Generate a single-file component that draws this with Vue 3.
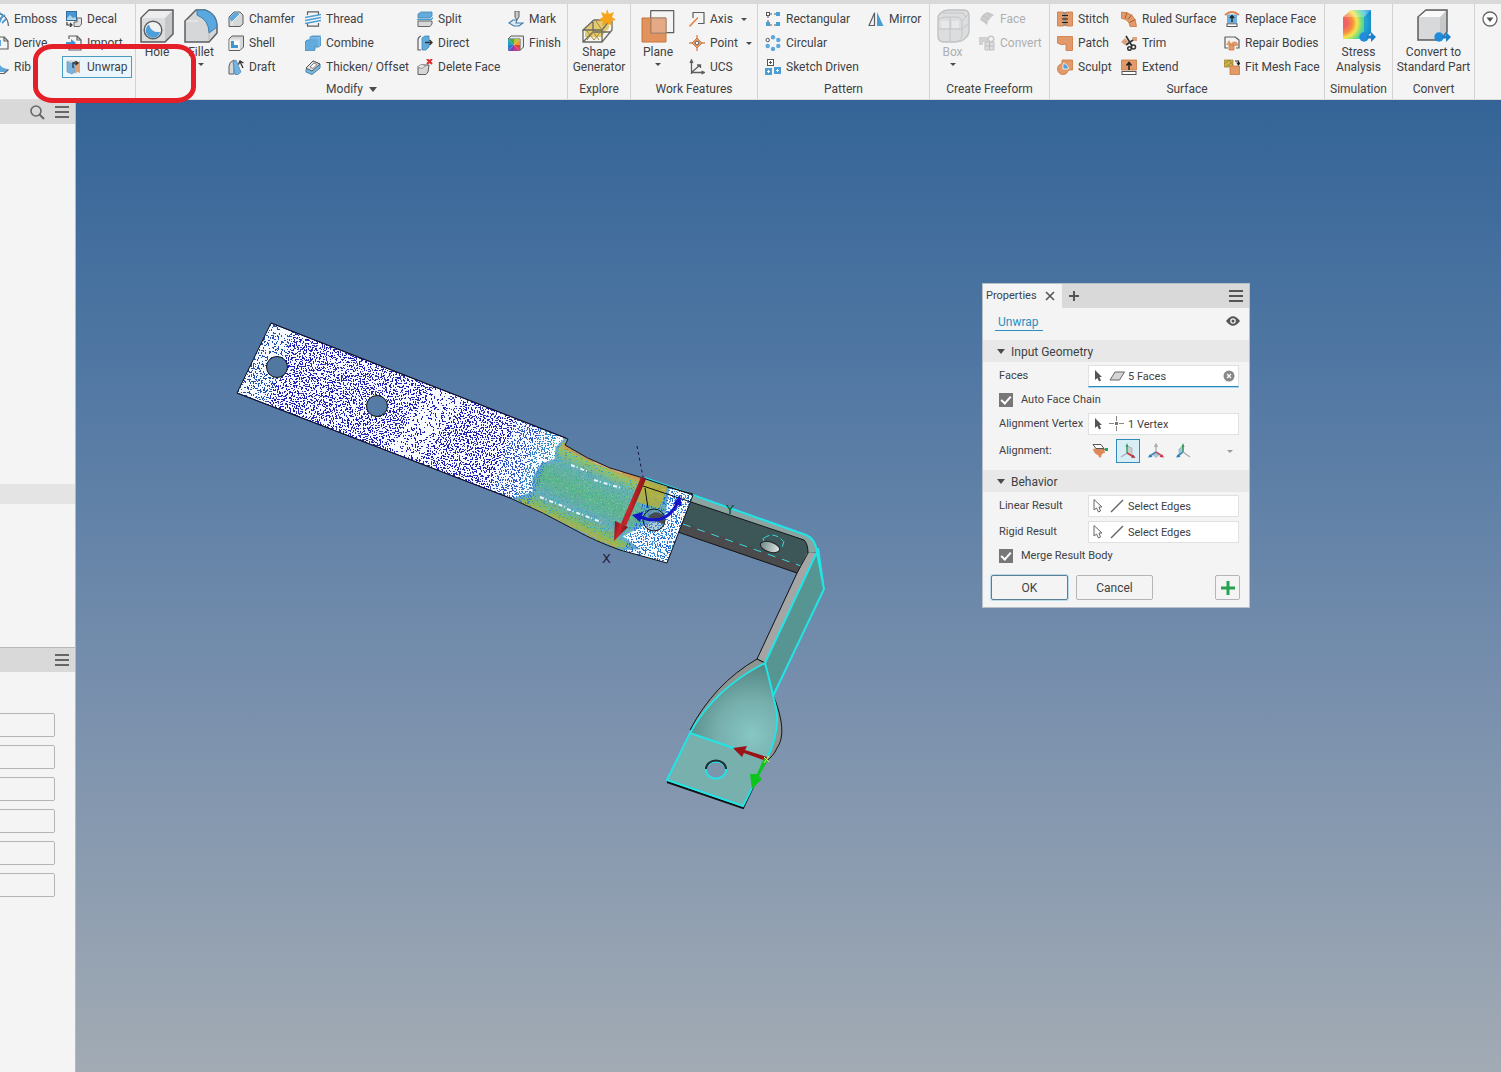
<script setup>
import { ref } from 'vue'

const K = 'fill="none" stroke="#5c5e60" stroke-width="1.2" stroke-linejoin="round"'
const B = 'fill="#5ea9dc"'
const O = 'fill="#e29a6a" stroke="#c9793f" stroke-width=".8"'
const G = 'fill="#d6d7d8"'

const icons = {
  emboss: `<path d="M1 14a11 11 0 0 1 14 0V10A9 9 0 0 0 1 5z" fill="#fff"/><path d="M2 2c7 0 13 4 13.400 13" ${K}/><path d="M3 5l5-3M5 9l7-5M9 12l4-4M6 12l4-8" fill="none" stroke="#4c9bd0" stroke-width="1.800"/>`,
  derive: `<path d="M6 2h5l4 4v8H6" ${K}/><path d="M11 2v4h4" ${K}/><path d="M0 5h8v6H5v3H0z" ${B}/>`,
  rib: `<path d="M6 2q0 7 9 8l-3 3H0V2z" ${B}/><path d="M0 14.500h11l4.500-4" ${K}/>`,
  decal: `<rect x=".5" y=".5" width="10" height="9" fill="#4898d8" stroke="#356c98"/><path d="M1 7l3-3 3 3 2-1 1 1v2H1z" fill="#a9d8ef"/><path d="M8 11h3V7h4.500v6l-2 2.500H8z" fill="#e0e1e2" stroke="#666"/><path d="M1 11v3h4M4 12l2 2-2 2" fill="none" stroke="#333" stroke-width="1.200"/>`,
  import: `<path d="M3 4V1h8l4 4v10H3v-3" ${K}/><path d="M11 1v4h4" ${K}/><path d="M0 7h5V4l5 4-5 4V9H0z" fill="#3e96d4"/>`,
  unwrap: `<path d="M1 2l5 2 3-2v11l-3 2-5-2z" fill="#7bb3dc" stroke="#5b8fb5" stroke-width=".6"/><path d="M1 2l4-1 4 1-3 2z" ${G}/><path d="M9 5l3-2 2-1v12l-3-1-2 2z" fill="#dfa27a"/><path d="M7 9V4h4M9.500 2L12 4 9.500 6" fill="none" stroke="#333" stroke-width="1.300"/>`,
  chamfer: `<path d="M1 6l5-5h6l3 3v9l-3 2.500H1z" ${G} stroke="#5c5e60"/><path d="M1 7l6-6 5 2-8 8z" ${B}/><path d="M4 15V11l8-8" fill="none" stroke="#eee"/>`,
  shell: `<path d="M1 4l3-3h11.500v11L12 15.500H1z" ${G} stroke="#5c5e60"/><path d="M1.500 4.500h10.500v10.500H1.500z" fill="#eee"/><path d="M3 6h8v7H3z" fill="#fff"/><path d="M3 6h3v4h4v3H3z" fill="#3e96d4"/>`,
  draft: `<path d="M1 15V7q0-4 5-6v14z" ${G} stroke="#5c5e60"/><path d="M5 3l3-2 5 12-3 2.500H7z" fill="#74b3df" stroke="#4387b5" stroke-width=".7"/><path d="M15 9L12 2.500M10.500 5.500L12 2l3.500 2" fill="none" stroke="#333" stroke-width="1.300"/>`,
  thread: `<path d="M2.500 4V.8h11V4M2.500 12v3.200h11V12" ${K}/><path d="M0 6.500l16-3M0 9.500l16-3M0 12.500l16-3" stroke="#4a9fd6" stroke-width="1.500"/>`,
  combine: `<path d="M5 2l2-1h9v9l-2 2h-4v3l-1 1H0V7l2-2h3z" fill="#64abdd" stroke="#4286b4" stroke-width=".8"/><path d="M5 3h9l2-2M14 3v9" fill="none" stroke="#8bc4eb"/>`,
  thicken: `<path d="M1 10L8 2l7 3v4l-8 6.500L1 13z" fill="#7ab8e2" stroke="#477fa8"/><path d="M1 9l7-7 7 3-8 7z" fill="#e1e3e5" stroke="#555"/><path d="M5 8l4-4 3 1.500L8 9.500z" fill="#f8f8f8" stroke="#666" stroke-width=".8"/>`,
  split: `<path d="M1 3l3-2h11v4l-2 2H1z" fill="#64abdd" stroke="#4286b4" stroke-width=".8"/><path d="M0 8.500h14l2-2" fill="none" stroke="#4a9fd6" stroke-width="1.400"/><path d="M1 10h14v3l-2 2.500H1z" ${G} stroke="#666"/>`,
  direct: `<path d="M4 1Q1 2 1 5v10h3" ${K}/><path d="M5 3l3-2h4v11l-3 3H5z" fill="#64abdd" stroke="#4286b4" stroke-width=".8"/><path d="M8 7.500h7M12.500 5L15 7.500 12.500 10" fill="none" stroke="#333" stroke-width="1.400"/>`,
  deleteface: `<path d="M1 9l4-3h7l-1 7-2 2.500H1z" ${G} stroke="#5c5e60"/><path d="M0 8l4-2.500 5 1-4 3z" fill="#e9eaeb" stroke="#777" stroke-width=".7"/><path d="M10 0l5 5M15 0l-5 5" stroke="#df2b2b" stroke-width="2"/>`,
  mark: `<path d="M7 0h4v6L9 9 7 6z" fill="#c9cbcc" stroke="#5c5e60"/><path d="M1 12l4-3h4l-1 3h7l-4 3H6z" fill="#dcebf6" stroke="#427da8" stroke-width="1.100"/>`,
  finish: `<path d="M0 4l3-3h12.500v11L12 15.500V4z" fill="#e8e9ea" stroke="#5c5e60"/><path d="M0 4h6v6z" fill="#43a857"/><path d="M0 4l6 6H0z" fill="#24a0b8"/><path d="M6 4h6l-6 6z" fill="#b9c52f"/><path d="M12 4v6H6z" fill="#f2972b"/><path d="M0 10h6l-6 6z" fill="#287dcc"/><path d="M6 10v6H0z" fill="#7846b1"/><path d="M6 10l6 6H6z" fill="#c8388e"/><path d="M6 10h6v6z" fill="#ea3f38"/>`,
  axis: `<path d="M4 7V1.500h11v11H9" ${K}/><path d="M.5 15.500L9 6.500" stroke="#df8750" stroke-width="1.600"/>`,
  point: `<path d="M8 0v5M8 11v5M0 8h4M12 8h4" stroke="#dc8850" stroke-width="1.400"/><path d="M8 3l5 5-5 5-5-5z" fill="#e5a071" stroke="#d0763a"/><circle cx="8" cy="8" r="1.800" fill="#fff" stroke="#5c5e60"/>`,
  ucs: `<path d="M2.500 15V2M1 4l1.500-3L4 4M3 13.500h12M12.500 12l3 1.500-3 1.500M3 13l8-7M8 6h3.500v3" fill="none" stroke="#5c5e60" stroke-width="1.300"/>`,
  rectangular: `<path d="M5 3h6M3 5v6M5 14h6" stroke="#555" stroke-dasharray="2 2"/><rect x="1.500" y="1.500" width="3" height="3" fill="#fff" stroke="#555"/><path d="M11 1h4v4h-4zM1 11h4v4H1zM11 11h4v4h-4z" fill="#4c9fd6"/>`,
  circular: `<circle cx="8" cy="2.200" r="2.200" ${B}/><circle cx="13.300" cy="5" r="2.200" ${B}/><circle cx="13.300" cy="11" r="2.200" ${B}/><circle cx="8" cy="14" r="2.200" ${B}/><circle cx="2.700" cy="11" r="2.200" ${B}/><circle cx="2.700" cy="5" r="1.700" fill="#fff" stroke="#555"/>`,
  sketch: `<rect x="2.500" y=".5" width="6" height="6" fill="#fff" stroke="#555"/><path d="M5.500 2v3M4 3.500h3" stroke="#555"/><path d="M0 9h7v7H0zM9 8h7v7H9z" fill="#4c9fd6"/><path d="M3.500 11v3M2 12.500h3M12.500 10v3M11 11.500h3" stroke="#fff"/>`,
  mirror: `<path d="M6.500 2v12.500H1z" ${K}/><path d="M9 1v14h6.500z" fill="#4c9fd6"/>`,
  face: `<path d="M1 9q2-7 8-8l6 3q-6 4-7 10-3-3-7-5z" fill="#c6c7c8"/><path d="M6 4q4 1 6 3M3 7q4 1 6 4" stroke="#d6d6d6" fill="none"/>`,
  convertff: `<path d="M0 2h9v5H4v3H0z" fill="#cfd0d1"/><circle cx="12" cy="4" r="2.800" fill="none" stroke="#c7c7c7" stroke-width="1.500"/><path d="M6 7h9v8H6z" fill="#dcdddd" stroke="#c1c1c1"/><path d="M10.500 7v8M6 11h9" stroke="#bbb"/>`,
  stitch: `<path d="M.5 1h6v14h-6zM9.500 1h6v14h-6z" ${O}/><path d="M8 1v14" stroke="#333"/><path d="M5 4.500h6M5 8h6M5 11.500h6" stroke="#222" stroke-width="1.200"/>`,
  patch: `<path d="M.5 1.500h15v14H9V9Q4 11 .5 8z" ${O}/>`,
  sculpt: `<path d="M5 1h10.500v10H10V6H5z" ${O}/><circle cx="6" cy="10" r="5.500" ${O}/><path d="M6 4.500A5.500 5.500 0 0 1 11.500 10H6z" fill="#4aa1dc" stroke="#fff" stroke-width=".8"/>`,
  ruled: `<path d="M.5 1q14 0 15 14.500H9Q8 8 .5 7.500z" ${O}/><path d="M7 8.500l4-5M8.500 11.500l6-3M4 7.500l2-6" stroke="#8d5127" stroke-width=".8"/>`,
  trim: `<path d="M0 7l4-4 3 4-3 3zM11 2h5v4h-4z" fill="#dea17e"/><path d="M5 1l6 10M12 5L5 10" stroke="#333" stroke-width="1.700"/><circle cx="12.500" cy="12" r="2" fill="none" stroke="#333" stroke-width="1.500"/><circle cx="8.500" cy="13.500" r="1.800" fill="none" stroke="#333" stroke-width="1.500"/>`,
  extend: `<path d="M.5 1h15v10H.500z" ${O}/><path d="M8 11V4M5.500 6.500L8 3.500l2.500 3" fill="none" stroke="#222" stroke-width="1.500"/><rect x="1" y="12.500" width="14" height="3" fill="#fff" stroke="#555"/>`,
  replace: `<path d="M1 4q7-6 14 0" fill="none" stroke="#d9824b" stroke-width="1.800"/><path d="M3 3.500h10V12H3z" fill="#69b0df"/><path d="M8 11V5M6 7l2-2.500L10 7" fill="none" stroke="#222" stroke-width="1.400"/><rect x="3" y="12.800" width="10" height="2.700" fill="#fff" stroke="#555"/>`,
  repair: `<path d="M4 13H1V2h10l4 3v8h-3" ${K}/><path d="M2 10l3-5 3 5zM7 10a3.500 3.500 0 0 1 7 0v1H7z" fill="#e29a6a"/><path d="M5 10h5v5H5z" ${O}/>`,
  fitmesh: `<path d="M0 1h9v7H0z" fill="#ccb04c" stroke="#99812b" stroke-width=".7"/><path d="M0 5l5-4 4 5M2 8l5-4" fill="none" stroke="#8c7629" stroke-width=".7"/><path d="M6 7h9.500v8.500H6z" ${O}/><path d="M11 2h3.500v3M12.800 3.500L14.500 6 16 3.500" fill="none" stroke="#222" stroke-width="1.200"/>`,
  hole: `<path d="M1 9l8-8h24v24l-8 8H1z" fill="#c6c7c8" stroke="#5c5e60" stroke-width="1.500"/><path d="M2 9l7-7h23l-7 7z" fill="#ededed"/><path d="M2 9h23v23H2z" fill="#dcddde"/><circle cx="13" cy="21" r="8.800" fill="#f2f2f2" stroke="#5c5e60" stroke-width="1.500"/><path d="M9 15.500A7.200 7.200 0 1 0 20 23Q11 24 9 15.500z" fill="#4c9fdb"/>`,
  fillet: `<path d="M1 33V12L12 1h9q12 4 12 17v6l-8 9z" ${G} stroke="#5c5e60" stroke-width="1.500"/><path d="M13 1h8q12 4 12 17l-8 6Q25 11 13 6z" fill="#59a8df" stroke="#407fae"/><path d="M2 12h12" stroke="#f0f0f0"/><path d="M25 24v8" stroke="#bbb"/>`,
  shape: `<path d="M3 19l9-7 15-1v8l-8 9H3z" fill="#e3c96f"/><path d="M1 21L12 11h16l-8 10zM1 21v12h19V21M20 33l10-12V12M1 33l10-10h18M11 11v11" fill="none" stroke="#6a6a60" stroke-width="1.300"/><path d="M5 31l6-8 6 8M5 22l7 9 7-9M14 12l6 9" fill="none" stroke="#a48a36"/><path d="M25 0l2 5 5-2-2 5 4 3-5 1 1 5-5-3-5 3 1-5-5-1 5-3-2-5 5 2z" fill="#f6a51b"/>`,
  plane: `<path d="M9.700 1.700h23v22h-23z" ${K}/><path d="M1 9h24v24H1z" fill="#e0884d" fill-opacity=".9" stroke="#c87438"/><path d="M10 9h15v15H10z" fill="#e3aa85" stroke="#777" stroke-width=".7"/>`,
  box: `<path d="M2 8q2-6 10-7h16q5 0 5 6v15q0 5-6 9-3 2-9 2H8q-6 0-6-6z" fill="#dcddde" stroke="#bfc0c1" stroke-width="1.300"/><path d="M2 11q3-3 8-3h11q5 1 5 6v12q0 5-5 6M26 12l6-6M14 8v24M2 20h24l7-6M7 4h20l3 4" fill="none" stroke="#c4c5c6"/><path d="M5 12h8v7H5zM16 12h7v7h-7z" fill="#e9e9e9"/>`,
  stress: `<defs><radialGradient id="heat" cx="0" cy=".45" r="1"><stop offset=".15" stop-color="#ef6264"/><stop offset=".35" stop-color="#f7913d"/><stop offset=".5" stop-color="#f6e64b"/><stop offset=".68" stop-color="#67dc85"/><stop offset=".85" stop-color="#35bfe2"/><stop offset="1" stop-color="#1c85d3"/></radialGradient></defs><path d="M1 8l8-7h20v23l-7 6H1z" fill="url(#heat)"/><path d="M22 8l7-7v23l-7 6z" fill="#1592c8" fill-opacity=".65"/><path d="M1 8l8-7h20l-7 7z" fill="#fff" fill-opacity=".25"/><circle cx="22" cy="28" r="4.700" fill="#218cdb"/><path d="M25 26.500h4V23l5 5-5 5v-3.500h-4z" fill="#1d7fca"/>`,
  standard: `<path d="M1 8l8-7h21v22l-7 8H1z" fill="#c7c8c9" stroke="#5c5e60" stroke-width="1.500"/><path d="M2 8l7-6h20l-6 6z" fill="#fafafa"/><path d="M2 8h21v22H2z" fill="#d8d9da"/><circle cx="22" cy="28" r="4.700" fill="#218cdb"/><path d="M25 26.500h4V23l5 5-5 5v-3.500h-4z" fill="#1d7fca"/>`,
  cursor: `<path d="M5 2v10l2.500-2L9 13.500l2-1L9.500 9H12z" fill="#555"/>`,
  cursorOutline: `<path d="M4 1.500v10.500l2.500-2L8.500 14l2-1L9 9h3z" fill="#fff" stroke="#666"/>`,
  facePick: `<path d="M1 12L6 4h9.500l-5 8z" fill="#d4d5d6" stroke="#666"/>`,
  vertexPick: `<path d="M7.500 0v5M7.500 10v5M0 7.500h5M10 7.500h5" stroke="#888"/><path d="M6 6h3v3H6z" fill="#777"/>`,
  edgePick: `<path d="M2 14L14 2" stroke="#666" stroke-width="1.400"/>`,
  alignFace: `<path d="M1 6q6-2 10 0 2 1 2 4-4 0-4 5-3-1-3-3-4-1-5-6z" fill="#dd8a58"/><path d="M1 1.500h8l3 4H4z" fill="#fff" stroke="#555"/><path d="M11 6.500h3" stroke="#777"/><path d="M13 5h3v3h-3z" fill="#27a557"/>`,
  alignXY: `<path d="M7 3l5 2v7l-5-2z" fill="#c9cccd" stroke="#aaa" stroke-width=".7"/><path d="M7 10V2" stroke="#2f9f57" stroke-width="1.300"/><path d="M5.500 4L7 0l1.500 4z" fill="#2f9f57"/><path d="M7 10l-6 4" stroke="#a7b0b5" stroke-width="1.300"/><path d="M7 10l6 3.500" stroke="#ce3540" stroke-width="1.500"/><path d="M15.500 15l-4.500-.5 2-3z" fill="#b52a36"/>`,
  alignXZ: `<path d="M8 9V1M6.500 4L8 1l1.500 3" fill="none" stroke="#aaa" stroke-width="1.200"/><path d="M8 8l5 3-5 4-5-4z" fill="#a9c5d8"/><path d="M8 9l-6 4" stroke="#2d7fb8" stroke-width="1.500"/><path d="M8 9l6 4" stroke="#ce3540" stroke-width="1.500"/><path d="M0 14.500l2-3.500 2.500 3z" fill="#2d7fb8"/><path d="M16 14.500l-2-3.500-2.500 3z" fill="#ce3540"/>`,
  alignYZ: `<path d="M7 3L3 6v7l4-4z" fill="#a9c5d8" stroke="#8faaba" stroke-width=".7"/><path d="M7 9V2" stroke="#2f9f57" stroke-width="1.500"/><path d="M5.500 4L7 0l1.500 4z" fill="#2f9f57"/><path d="M7 9l-5 4" stroke="#2d7fb8" stroke-width="1.500"/><path d="M0 14.500l2-3.500 2.500 3z" fill="#2d7fb8"/><path d="M7 9l7 5" stroke="#aaa" stroke-width="1.300"/>`
}

const groups = [
  { id: 'create', label: '', large: [], columns: [
    [['emboss', 'Emboss'], ['derive', 'Derive'], ['rib', 'Rib']],
    [['decal', 'Decal'], ['import', 'Import'], ['unwrap', 'Unwrap', 'active']]
  ] },
  { id: 'modify', label: 'Modify', menu: true, large: [
    { icon: 'hole', lines: ['Hole'] }, { icon: 'fillet', lines: ['Fillet'], caret: true }
  ], columns: [
    [['chamfer', 'Chamfer'], ['shell', 'Shell'], ['draft', 'Draft']],
    [['thread', 'Thread'], ['combine', 'Combine'], ['thicken', 'Thicken/ Offset']],
    [['split', 'Split'], ['direct', 'Direct'], ['deleteface', 'Delete Face']],
    [['mark', 'Mark'], ['finish', 'Finish']]
  ] },
  { id: 'explore', label: 'Explore', large: [{ icon: 'shape', lines: ['Shape', 'Generator'] }], columns: [] },
  { id: 'work', label: 'Work Features', large: [{ icon: 'plane', lines: ['Plane'], caret: true }], columns: [
    [['axis', 'Axis', 'menu'], ['point', 'Point', 'menu'], ['ucs', 'UCS']]
  ] },
  { id: 'pattern', label: 'Pattern', large: [], columns: [
    [['rectangular', 'Rectangular'], ['circular', 'Circular'], ['sketch', 'Sketch Driven']],
    [['mirror', 'Mirror']]
  ] },
  { id: 'freeform', label: 'Create Freeform', large: [{ icon: 'box', lines: ['Box'], caret: true, off: true }], columns: [
    [['face', 'Face', 'off'], ['convertff', 'Convert', 'off']]
  ] },
  { id: 'surface', label: 'Surface', large: [], columns: [
    [['stitch', 'Stitch'], ['patch', 'Patch'], ['sculpt', 'Sculpt']],
    [['ruled', 'Ruled Surface'], ['trim', 'Trim'], ['extend', 'Extend']],
    [['replace', 'Replace Face'], ['repair', 'Repair Bodies'], ['fitmesh', 'Fit Mesh Face']]
  ] },
  { id: 'simulation', label: 'Simulation', large: [{ icon: 'stress', lines: ['Stress', 'Analysis'] }], columns: [] },
  { id: 'convert', label: 'Convert', large: [{ icon: 'standard', lines: ['Convert to', 'Standard Part'] }], columns: [] }
]

const faces = ref('5 Faces')
const vertex = ref('1 Vertex')
const linear = ref('Select Edges')
const rigid = ref('Select Edges')
const autoChain = ref(true)
const mergeBody = ref(true)
const alignments = ['alignFace', 'alignXY', 'alignXZ', 'alignYZ']
const alignment = ref('alignXY')

// Mesh speckle: small cells scattered over the flattened strip, sorted by colour.
let seed = 7
const rnd = () => (seed = (seed * 16807) % 2147483647) / 2147483647
const buckets = {}
const put = (color, x, y, w, h) => { buckets[color] = (buckets[color] || '') + `M${x} ${y}h${w}v${h}h-${w}z` }
const pick = list => list[Math.floor(rnd() * list.length)]
for (let y = 322; y < 566; y += 2) {
  for (let x = 236; x < 696; x += 2) {
    const along = (x - 271) * 0.932 + (y - 323) * 0.363
    const across = -(x - 271) * 0.363 + (y - 323) * 0.932
    if (across < -2 || across > 84) continue
    const r = rnd()
    if (along > 306 && along < 410) {
      const sag = 12 * Math.min(1, (along - 306) / 70)
      const edge = Math.min(across - sag + 6, 86 - across)
      const core = across > 28 && across < 58
      const palette = edge < 10 ? ['#c9b43c', '#6fc04a', '#8fc93f', '#7ab562'] : core ? ['#2fb56e', '#43b98a', '#6fd39a', '#38a7a0'] : ['#2aa5c9', '#58c5c8', '#3f8fc0', '#66c98c']
      if (r < 0.5) put(pick(palette), x + (rnd() > 0.5 ? 1 : 0), y + (rnd() > 0.5 ? 1 : 0), 1, 1)
    } else {
      const fade = Math.abs(along - 182 + (across - 35) * 0.3) < 16 ? 0.42 : along < 20 ? 0.66 : 0.86
      const tint = along < 24 ? '#1f4fa8' : along > 410 ? pick(['#2467cf', '#3f93d8']) : along > 288 ? '#3a86c8' : along > 262 ? '#2f56c4' : pick(['#1a1aa8', '#2626b8', '#1c1ccc', '#3a3a9c'])
      const form = rnd()
      const w = form < 0.33 ? 2 : 1
      const h = form > 0.66 ? 2 : 1
      if (r < fade) put(tint, x + (rnd() > 0.5 ? 1 : 0), y + (rnd() > 0.5 ? 1 : 0), w, h)
    }
  }
}
const strip = 'M271 323L568 439L565 445Q587 459 610 468L643 478L693 495L667 563L620 550Q595 541 577 531Q543 512 510 498L237 393Z'
</script>

<template>
  <div class="app">
    <header class="ribbon">
      <section v-for="g in groups" :key="g.id" class="group" :class="g.id">
        <div class="tools">
          <button v-for="b in g.large" :key="b.icon" class="large" :class="{ off: b.off }" :disabled="b.off">
            <svg viewBox="0 0 34 34" width="34" height="34" aria-hidden="true" v-html="icons[b.icon]" />
            <span v-for="line in b.lines" :key="line">{{ line }}</span>
            <i v-if="b.caret" class="caret" />
          </button>
          <div v-for="(col, i) in g.columns" :key="i" class="stack">
            <button v-for="[icon, name, state] in col" :key="name" class="small" :class="state" :disabled="state === 'off'">
              <svg viewBox="0 0 16 16" width="16" height="16" aria-hidden="true" v-html="icons[icon]" />
              <span>{{ name }}</span>
              <i v-if="state === 'menu'" class="caret" />
            </button>
          </div>
        </div>
        <div class="group-label">{{ g.label }}<i v-if="g.menu" class="caret wide" /></div>
      </section>
      <button class="expand" aria-label="Ribbon options">
        <svg viewBox="0 0 16 16" width="16" height="16"><circle cx="8" cy="8" r="7" fill="#fff" stroke="#666" stroke-width="1.300" /><path d="M4.500 6.500h7L8 11z" fill="#555" /></svg>
      </button>
      <div class="callout" />
    </header>

    <main class="work-area">
      <aside class="sidebar">
        <div class="side-head">
          <button aria-label="Search"><svg viewBox="0 0 16 16" width="16" height="16"><circle cx="7" cy="7" r="5" fill="none" stroke="#666" stroke-width="1.600" /><path d="M10.500 10.500L15 15" stroke="#666" stroke-width="2" /></svg></button>
          <button aria-label="Browser menu"><svg viewBox="0 0 14 12" width="14" height="12"><path d="M0 1h14M0 6h14M0 11h14" stroke="#666" stroke-width="2" /></svg></button>
        </div>
        <div class="tree"><div class="tree-row" /></div>
        <div class="side-head lower">
          <button aria-label="Panel menu"><svg viewBox="0 0 14 12" width="14" height="12"><path d="M0 1h14M0 6h14M0 11h14" stroke="#666" stroke-width="2" /></svg></button>
        </div>
        <div class="slots"><input v-for="n in 6" :key="n" type="text" :aria-label="`Value ${n}`"></div>
      </aside>

      <div class="viewport">
        <svg class="model" viewBox="226 309 614 510" width="614" height="510" role="img" aria-label="Bracket with unwrapped flat result">
          <defs>
            <linearGradient id="bend" gradientUnits="userSpaceOnUse" x1="606" y1="464" x2="576" y2="530">
              <stop offset="0" stop-color="#cda05c" /><stop offset=".08" stop-color="#95c062" /><stop offset=".22" stop-color="#66afb4" />
              <stop offset=".5" stop-color="#62b48f" /><stop offset=".76" stop-color="#66aab8" /><stop offset=".9" stop-color="#80b966" /><stop offset="1" stop-color="#b9ac50" />
            </linearGradient>
            <radialGradient id="fin" gradientUnits="userSpaceOnUse" cx="752" cy="735" r="72">
              <stop offset="0" stop-color="#86c7c4" /><stop offset=".5" stop-color="#76aeac" /><stop offset="1" stop-color="#508582" />
            </radialGradient>
            <linearGradient id="shaft" x1="0" y1="0" x2="1" y2=".4"><stop offset="0" stop-color="#7d1216" /><stop offset=".5" stop-color="#c8262c" /><stop offset="1" stop-color="#6d0d12" /></linearGradient>
            <linearGradient id="bore" x1="0" y1="0" x2="1" y2="0"><stop offset="0" stop-color="#6f8886" /><stop offset="1" stop-color="#dfe8e6" /></linearGradient>
            <clipPath id="stripClip"><path :d="strip" /></clipPath>
          </defs>

          <path d="M645 480L668 487L693 494L806 535Q815 539 816 552L809 553L797 573L672 530Z" fill="#3d5657" />
          <path d="M679 521L801 565L797 573L676 531Z" fill="#4b4a4d" />
          <path d="M668 487L806 535Q816 540 816 552L808 553Q808 544 804 540L691 502Z" fill="#8ba3a1" />
          <path d="M691 502L804 540Q808 544 808 553L816 556M672 530L797 573" fill="none" stroke="#151515" />
          <path d="M683 524L804 567" fill="none" stroke="#35dce0" stroke-dasharray="8 7" />
          <path d="M764 538Q774 531 783 541M763 538l2 8M784 541l-2 7" fill="none" stroke="#35dce0" stroke-dasharray="6 3" />
          <ellipse cx="770" cy="547" rx="10" ry="5" transform="rotate(18 770 547)" fill="url(#bore)" stroke="#222" />
          <path d="M807 553L816 553L765 663L757 659Z" fill="#a5a5a5" />
          <path d="M797 573L757 659L765 663M808 553l-11 20" fill="none" stroke="#151515" />
          <path d="M816 553L824 589L773 696L765 663Z" fill="#579592" />

          <path d="M757 659Q714 684 690 730L765 663ZM774 697Q788 733 777 748Q773 757 766 761Z" fill="#8e9490" stroke="#151515" />
          <path d="M765 663Q715 688 690 733L767 760Q776 742 777 720Q777 708 773 696Z" fill="url(#fin)" />
          <path d="M690 733L767 760L743 806L668 780Z" fill="#78b0ad" />
          <path d="M667 782L743 808L753 787" fill="none" stroke="#111" stroke-width="2" />
          <g fill="none" stroke="#22e4e6" stroke-width="2">
            <path d="M645 478L806 535Q816 539 817 553L824 589L773 696M818 548L823 583M816 554L765 663" />
            <path d="M765 663Q715 688 690 733L667 780L743 806L766 760Q778 738 777 715Q776 705 765 663M690 733L736 749" />
          </g>
          <ellipse cx="716" cy="770" rx="10" ry="8.500" fill="#7d94ad" stroke="#22e4e6" stroke-width="2" />
          <path d="M706 769a10 8.500 0 0 1 20 0" fill="none" stroke="#20292b" stroke-width="2" />

          <path :d="strip" fill="#f7faff" />
          <g clip-path="url(#stripClip)">
            <path d="M566 439L557 448L556 460L542 465L534 478L534 493L512 500L615 549L636 548L620 536L664 514L668 487L643 478Z" fill="url(#bend)" stroke="#69aac9" stroke-width="3" />
            <path v-for="(d, color) in buckets" :key="color" :d="d" :fill="color" />
            <path d="M571 465l18 7M594 480l27 8M540 497l25 10M567 509l34 13" fill="none" stroke="#e8f8ff" stroke-width="2" stroke-dasharray="4 2 1 3" />
            <path d="M594 461l28 11" stroke="#ffe2d5" stroke-width="3" />
            <path d="M566 446Q587 461 643 480" fill="none" stroke="#d88a45" stroke-width="3" stroke-opacity=".5" />
          </g>
          <path :d="strip" fill="none" stroke="#101018" />
          <path d="M237 393L510 498M271 323L566 438" stroke="#10103a" />
          <circle cx="277" cy="367" r="10.500" fill="#5278a2" stroke="#111" />
          <circle cx="377" cy="406" r="10.500" fill="#567ba4" stroke="#111" />

          <path d="M645 480L668 487L659 508L637 502Z" fill="#b5b13c" fill-opacity=".85" />
          <path d="M643 486L691 502M645 488l3 20M667 487L693 494" fill="none" stroke="#111" />
          <circle cx="654" cy="520" r="11" fill="#6c9dbb" fill-opacity=".5" stroke="#111" />
          <path d="M648 517Q655 508 664 516L665 525Z" fill="#454b50" />
          <path d="M640 517Q666 527 678 502" fill="none" stroke="#1515c8" stroke-width="3" />
          <path d="M632 515L643 512L640 522ZM680 495L673 504L682 506Z" fill="#1515c8" />
          <path d="M637 446L643 477" fill="none" stroke="#17173f" stroke-dasharray="3 3" />
          <path d="M641 477L646 479L626 526L621 524Z" fill="url(#shaft)" />
          <path d="M614 541L615 521L628 527Z" fill="url(#shaft)" />
          <path d="M767 757L745 750L747 746L733 748L742 757L744 753L766 761Z" fill="#9b1216" />
          <path d="M764 758L757 774L750 774L752 789L762 779L759 776L768 760Z" fill="#0cc51c" />
          <path d="M764 757l5 5M769 756l-5 7" stroke="#ecec54" />
          <text x="602" y="563" fill="#2b1a3c">X</text>
          <text x="726" y="514" fill="#064a28">Y</text>
        </svg>

        <section class="panel">
          <div class="tabs">
            <div class="tab">Properties
              <button aria-label="Close"><svg viewBox="0 0 10 10" width="10" height="10"><path d="M1 1l8 8M9 1L1 9" stroke="#555" stroke-width="1.600" /></svg></button>
            </div>
            <button class="add-tab" aria-label="Add tab"><svg viewBox="0 0 10 10" width="10" height="10"><path d="M5 0v10M0 5h10" stroke="#555" stroke-width="2" /></svg></button>
            <button class="panel-menu" aria-label="Panel menu"><svg viewBox="0 0 14 12" width="14" height="12"><path d="M0 1h14M0 6h14M0 11h14" stroke="#555" stroke-width="2" /></svg></button>
          </div>
          <div class="crumb">
            <a href="#unwrap">Unwrap</a>
            <button aria-label="Toggle preview"><svg viewBox="0 0 14 10" width="14" height="10"><path d="M0 5q7-9.500 14 0-7 9.500-14 0z" fill="#555" /><circle cx="7" cy="5" r="2.800" fill="#f4f4f4" /><circle cx="7" cy="5" r="1.500" fill="#555" /></svg></button>
          </div>

          <h2><i class="caret wide" />Input Geometry</h2>
          <div class="row first">
            <label for="faces">Faces</label>
            <div class="field focused">
              <svg viewBox="0 0 16 16" width="16" height="16" v-html="icons.cursor" /><svg viewBox="0 0 16 16" width="16" height="16" v-html="icons.facePick" />
              <input id="faces" v-model="faces" type="text">
              <button aria-label="Clear faces"><svg viewBox="0 0 12 12" width="12" height="12"><circle cx="6" cy="6" r="5.500" fill="#888" /><path d="M4 4l4 4M8 4L4 8" stroke="#fff" stroke-width="1.300" /></svg></button>
            </div>
          </div>
          <div class="row check"><input id="chain" v-model="autoChain" type="checkbox"><label for="chain">Auto Face Chain</label></div>
          <div class="row">
            <label for="vertex">Alignment Vertex</label>
            <div class="field">
              <svg viewBox="0 0 16 16" width="16" height="16" v-html="icons.cursor" /><svg viewBox="0 0 16 16" width="16" height="16" v-html="icons.vertexPick" />
              <input id="vertex" v-model="vertex" type="text">
            </div>
          </div>
          <div class="row align">
            <span class="name">Alignment:</span>
            <button v-for="a in alignments" :key="a" :class="{ chosen: a === alignment }" :aria-label="a" @click="alignment = a"><svg viewBox="0 0 16 16" width="16" height="16" v-html="icons[a]" /></button>
            <i class="caret" />
          </div>

          <h2><i class="caret wide" />Behavior</h2>
          <div class="row first">
            <label for="linear">Linear Result</label>
            <div class="field">
              <svg viewBox="0 0 16 16" width="16" height="16" v-html="icons.cursorOutline" /><svg viewBox="0 0 16 16" width="16" height="16" v-html="icons.edgePick" />
              <input id="linear" v-model="linear" type="text">
            </div>
          </div>
          <div class="row next">
            <label for="rigid">Rigid Result</label>
            <div class="field">
              <svg viewBox="0 0 16 16" width="16" height="16" v-html="icons.cursorOutline" /><svg viewBox="0 0 16 16" width="16" height="16" v-html="icons.edgePick" />
              <input id="rigid" v-model="rigid" type="text">
            </div>
          </div>
          <div class="row check"><input id="merge" v-model="mergeBody" type="checkbox"><label for="merge">Merge Result Body</label></div>
          <div class="actions">
            <button class="ok">OK</button>
            <button>Cancel</button>
            <button class="apply" aria-label="Apply and create new"><svg viewBox="0 0 16 16" width="16" height="16"><path d="M8 1v14M1 8h14" stroke="#27a152" stroke-width="3" /></svg></button>
          </div>
        </section>
      </div>
    </main>
  </div>
</template>

<style>
body { margin: 0; }
</style>

<style scoped>
.app { display: flex; flex-direction: column; min-height: 100vh; overflow: hidden; font: 12px/16px Roboto, "Open Sans", sans-serif; color: #3f4144; }
* { box-sizing: border-box; }
button { font: inherit; color: inherit; background: none; border: 0; padding: 0; margin: 0; }
svg { display: block; flex: none; }
.caret { flex: none; border: 3px solid transparent; border-top-color: #4a4c4e; border-bottom: 0; }
.caret.wide { border-width: 5px 4px 0; }

.ribbon { position: relative; display: flex; height: 100px; border-top: 4px solid #d9d9d9; border-bottom: 1px solid #dcdcdc; background: #f4f4f4; }
.group { flex: none; display: flex; flex-direction: column; border-right: 1px solid #d2d2d2; }
.tools { display: grid; height: 75px; padding-top: 3px; }
.create { margin-left: -11px; }
.create .tools { grid-template-columns: 73px 73px; }
.modify .tools { grid-template-columns: 42px 46px 77px 112px 91px 63px; }
.explore .tools { grid-template-columns: 62px; }
.work .tools { grid-template-columns: 54px 72px; }
.pattern .tools { grid-template-columns: 103px 65px; padding-left: 3px; }
.freeform .tools { grid-template-columns: 45px 74px; }
.surface .tools { grid-template-columns: 64px 103px 104px; padding-left: 3px; }
.simulation .tools { grid-template-columns: 67px; }
.convert .tools { grid-template-columns: 81px; }
.stack { display: flex; flex-direction: column; align-items: flex-start; gap: 2px; padding-top: 1px; }
.small { display: flex; align-items: center; gap: 5px; height: 22px; padding: 0 3px; border: 1px solid transparent; white-space: nowrap; }
.small .caret { margin-left: 3px; }
.active { border-color: #4a9cc4; background: #eaf6fc; }
.off { color: #adafb0; }
.large { display: flex; flex-direction: column; align-items: center; padding-top: 2px; line-height: 15px; white-space: nowrap; }
.large svg { margin-bottom: 2px; }
.large .caret { margin-top: 3px; }
.group-label { display: flex; align-items: center; justify-content: center; gap: 6px; height: 20px; white-space: nowrap; }
.expand { align-self: flex-start; margin: 7px 0 0 7px; }
.callout { position: absolute; z-index: 2; left: 33px; top: 40px; width: 163px; height: 59px; border: 5px solid #e51f27; border-radius: 20px / 16px; }

.work-area { flex: 1; display: flex; }
.sidebar { flex: none; width: 76px; background: #f4f4f4; border-right: 1px solid #b6b9bc; }
.side-head { display: flex; align-items: center; justify-content: flex-end; gap: 10px; height: 24px; padding-right: 6px; background: #d9d9d9; }
.lower { height: 25px; border-top: 1px solid #b8b8b8; }
.tree { height: 523px; padding-top: 360px; }
.tree-row { height: 20px; background: #e4e4e4; }
.slots { display: flex; flex-direction: column; gap: 8px; padding: 41px 20px 0 0; }
.slots input { width: 100%; height: 24px; background: #f4f4f4; border: 1px solid #b4b4b4; border-left: 0; border-radius: 0 2px 2px 0; }

.viewport { flex: 1; position: relative; background: linear-gradient(#346497, #5379a4 30%, #7990ad 62%, #a2abb4); }
.model { position: absolute; left: 150px; top: 209px; font: 13px "DejaVu Sans", sans-serif; }

.panel { position: absolute; right: 251px; top: 183px; width: 268px; background: #f4f4f4; border: 1px solid #b9bfc6; font-size: 11px; }
.tabs { display: flex; align-items: center; height: 24px; padding-right: 6px; background: #d9d9d9; }
.tab { display: flex; align-items: center; justify-content: space-between; width: 79px; height: 24px; padding: 0 7px 0 3px; background: #f4f4f4; }
.add-tab { margin-left: 7px; }
.panel-menu { margin-left: auto; }
.crumb { display: flex; align-items: flex-start; justify-content: space-between; height: 32px; padding: 7px 9px 0 12px; }
.crumb a { padding: 0 4px 0 3px; font-size: 12px; line-height: 15px; color: #2b8fc0; text-decoration: none; border-bottom: 1px solid #2b8fc0; }
.crumb button { margin-top: 1px; }
h2 { display: flex; align-items: center; gap: 6px; height: 22px; margin: 0; padding: 1px 0 0 14px; background: #e8e8e8; font-size: 12px; font-weight: 400; }
.row { display: flex; align-items: center; height: 22px; padding: 0 10px 0 16px; }
.row > label, .name { flex: none; width: 89px; white-space: nowrap; }
.first { margin-top: 3px; }
.next { margin-top: 4px; }
.field { flex: 1; min-width: 0; display: flex; align-items: center; gap: 3px; height: 22px; padding: 0 3px 0 1px; background: #fff; border: 1px solid #e0e0e0; }
.field input { flex: 1; width: 100%; min-width: 0; height: 20px; padding: 0; background: none; border: 0; outline: 0; font: inherit; color: inherit; }
.focused { border-bottom: 1px solid #2789bd; box-shadow: 0 1px #a8d8ee; }
.check { height: 26px; }
.check input { appearance: none; width: 14px; height: 14px; margin: 0 8px 0 0; background: #777; }
.check input:checked::after { content: ""; display: block; width: 4px; height: 8px; margin: 1px 0 0 4px; border: solid #fff; border-width: 0 2px 2px 0; transform: rotate(42deg); }
.align { height: 35px; gap: 4px; padding-bottom: 3px; }
.align .name { width: 85px; }
.align button { width: 24px; height: 24px; padding: 3px; border: 1px solid transparent; }
.align .chosen { border-color: #2f8cb9; background: #d9edf7; }
.align .caret { margin: 0 6px 0 auto; border-top-color: #999; }
.actions { display: flex; gap: 8px; padding: 6px 9px 7px 8px; }
.actions button { width: 77px; height: 25px; border: 1px solid #b3b5b7; border-radius: 2px; font-size: 12px; }
.actions .ok { border-color: #5d7d92; box-shadow: 0 0 0 1px #b8dcec; }
.actions .apply { display: flex; align-items: center; justify-content: center; width: 25px; margin-left: auto; }
</style>
